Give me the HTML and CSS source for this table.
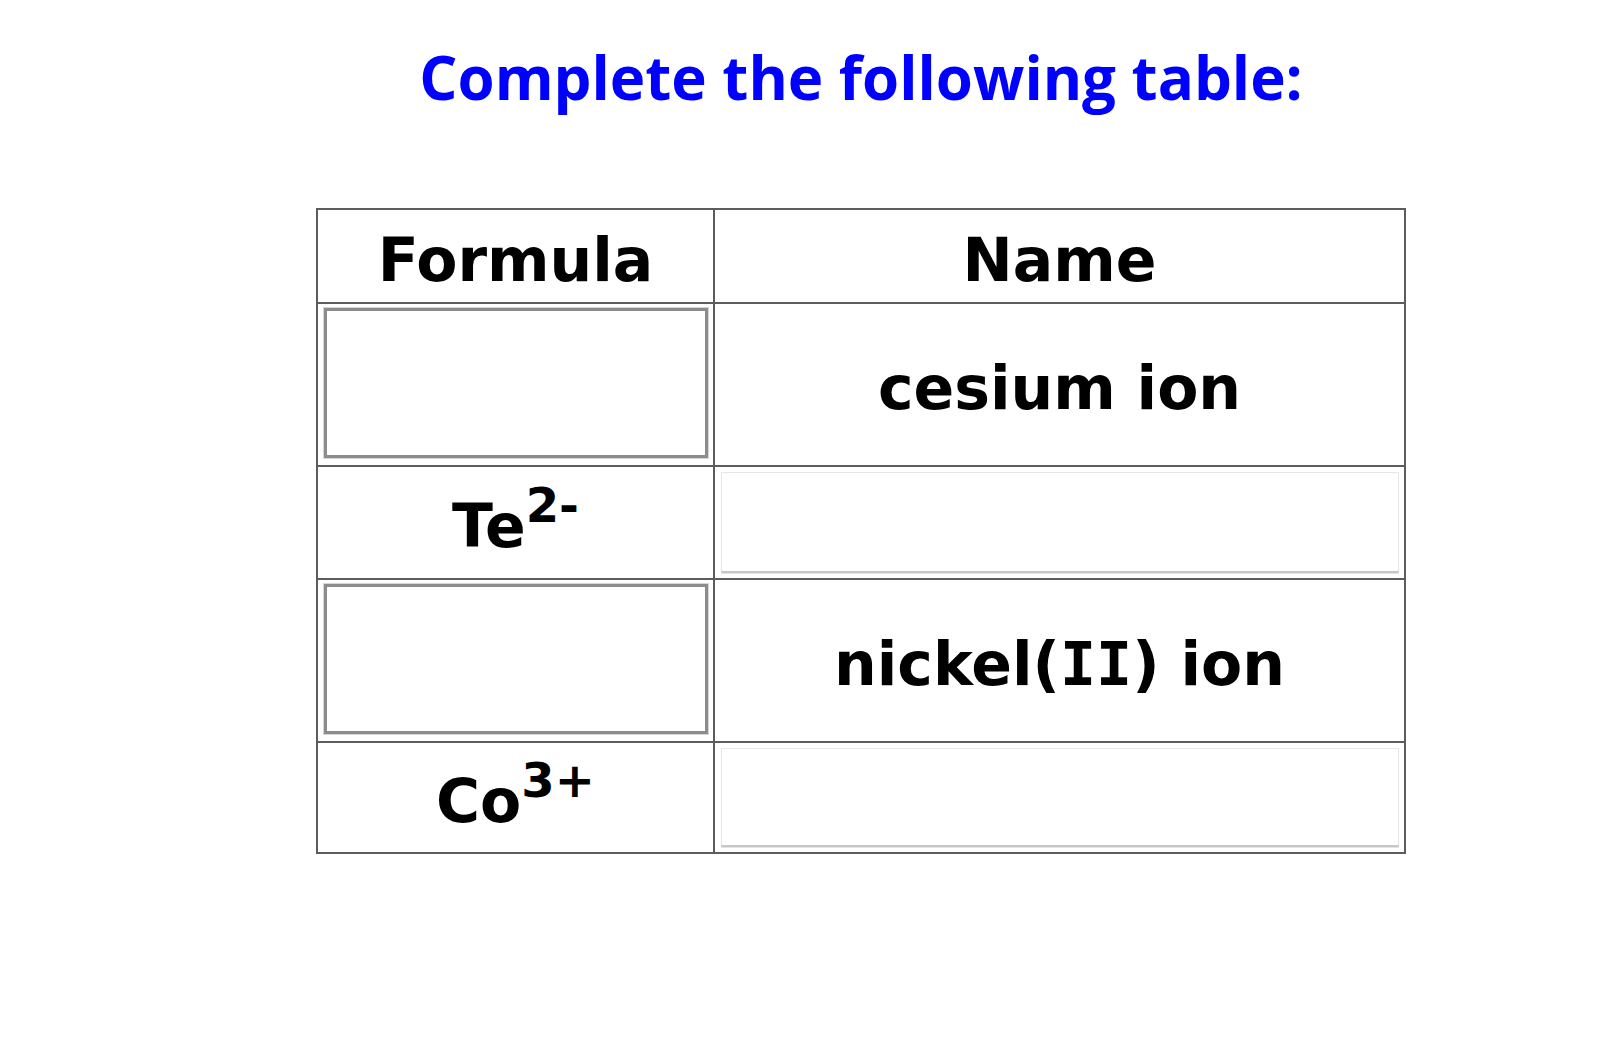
FILE: index.html
```html
<!DOCTYPE html>
<html lang="en">
<head>
<meta charset="utf-8">
<title>Complete the following table</title>
<link rel="stylesheet" href="styles.css">
</head>
<body>
<main class="page">
  <h1 class="title">Complete the following table:</h1>
  <div class="grid">
    <div class="cell head"><span class="label">Formula</span></div>
    <div class="cell head"><span class="label">Name</span></div>

    <div class="cell slot slot-formula"><input class="box box-formula" type="text" aria-label="Formula for cesium ion"></div>
    <div class="cell text"><span class="label">cesium ion</span></div>

    <div class="cell text"><span class="label">Te<sup class="sup">2-</sup></span></div>
    <div class="cell slot slot-name"><input class="box box-name" type="text" aria-label="Name for Te2-"></div>

    <div class="cell slot slot-formula"><input class="box box-formula" type="text" aria-label="Formula for nickel(II) ion"></div>
    <div class="cell text"><span class="label">nickel(<span class="roman">II</span>) ion</span></div>

    <div class="cell text"><span class="label">Co<sup class="sup">3+</sup></span></div>
    <div class="cell slot slot-name"><input class="box box-name" type="text" aria-label="Name for Co3+"></div>
  </div>
</main>
</body>
</html>
```

FILE: styles.css
```css
html, body {
  margin: 0;
  padding: 0;
  background: #ffffff;
}

.page {
  width: 1090px;
  margin-left: 316px;
  padding-top: 47px;
}

.title {
  margin: 0;
  font-family: "Open Sans", "DejaVu Sans", sans-serif;
  font-weight: 700;
  font-size: 60px;
  line-height: 60px;
  color: #0000ff;
  text-align: center;
}

.grid {
  margin-top: 101px;
  display: grid;
  grid-template-columns: 395px 689px;
  grid-template-rows: 92px 161px 111px 161px 109px;
  gap: 2px;
  padding: 2px;
  background: #5c5c5c;
  width: fit-content;
}

.cell {
  background: #ffffff;
  display: flex;
  align-items: center;
  justify-content: center;
  font-family: "DejaVu Sans", Verdana, sans-serif;
  font-weight: 700;
  font-size: 60px;
  line-height: 60px;
  color: #000000;
  box-sizing: border-box;
  min-width: 0;
}

.head,
.text {
  padding-top: 7px;
}

.label {
  white-space: nowrap;
}

.roman {
  font-family: "DejaVu Sans Mono", "DejaVu Sans", monospace;
  font-weight: 700;
}

.sup {
  font-size: 48px;
  line-height: 0;
  vertical-align: 25px;
}

.slot {
  align-items: stretch;
  justify-content: stretch;
}

.slot-formula {
  padding: 4px 5px 7px 6px;
}

.slot-name {
  padding: 5px 5px 5px 6px;
}

.box {
  flex: 1 1 auto;
  width: 100%;
  min-width: 0;
  margin: 0;
  padding: 0;
  box-sizing: border-box;
  background: #ffffff;
  font: inherit;
  outline: none;
}

.box-formula {
  border: 3px solid #8c8c8c;
  box-shadow: 0 0 0 1px #d6d6d6;
}

.box-name {
  border: 1px solid #e6e6e6;
  border-bottom: 2px solid #c6c6c6;
  box-shadow: 0 1px 0 #e4e4e4;
}
```
